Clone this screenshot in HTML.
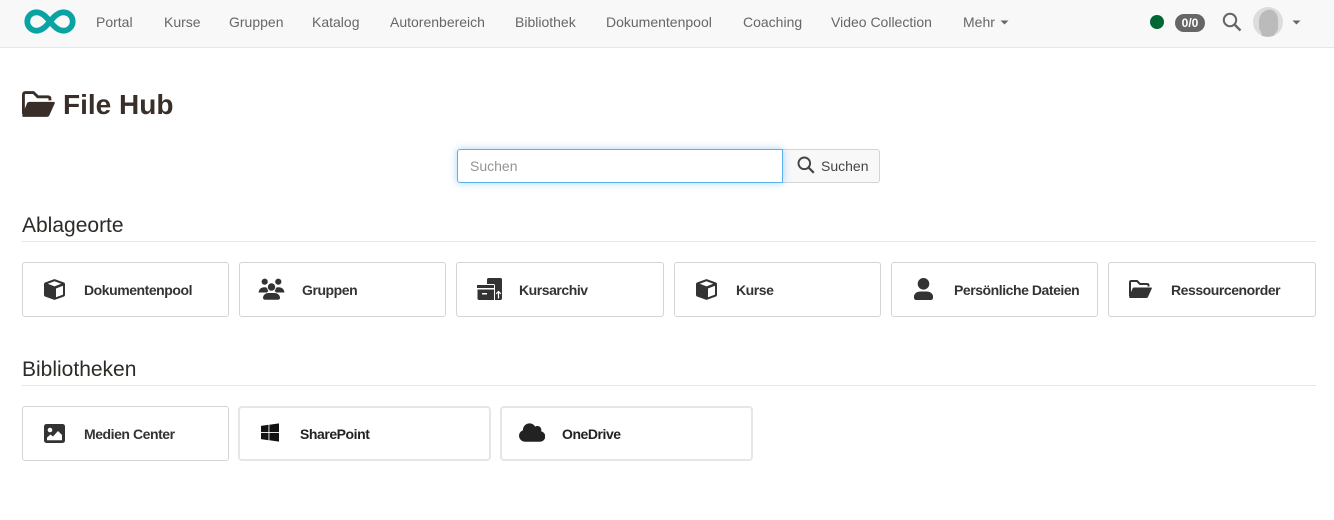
<!DOCTYPE html>
<html lang="de">
<head>
<meta charset="utf-8">
<title>File Hub</title>
<style>
html,body{margin:0;padding:0;background:#fff}
body{width:1334px;height:520px;position:relative;overflow:hidden;font-family:"Liberation Sans",sans-serif;color:#333}
.abs,.nav a,.card,svg{position:absolute}
#bar{position:absolute;left:0;top:0;width:1334px;height:47px;background:#f8f8f8;border-bottom:1px solid #e7e7e7}
.nav a{top:13px;font-size:14px;line-height:18px;color:#666;white-space:nowrap;text-decoration:none}
.card{box-sizing:border-box;height:55px;background:#fff;border:1px solid #d4d4d4;border-radius:3px}
.card.blur{border:2px solid #e6e6e6;border-radius:4px;height:55px;filter:blur(.3px)}
.txt{position:absolute;font-size:14px;font-weight:bold;line-height:18px;color:#333;white-space:nowrap;letter-spacing:-.45px}
.soft{filter:blur(.3px)}
h1,h3{margin:0;font-weight:normal;position:absolute;white-space:nowrap}
h1{left:63px;top:87px;font-size:28px;line-height:36px;font-weight:bold;color:#3a2f28}
h3{left:22px;font-size:21px;line-height:26px;color:#2e2a26}
.rule{position:absolute;left:22px;width:1294px;height:1px;background:#e6e6e6}
svg{fill:#333}
</style>
</head>
<body>
<div id="bar"></div>
<svg style="left:0;top:0;fill:none" width="100" height="47" viewBox="0 0 100 47"><path d="M50 21.500C46 16.500 42 12.300 36.500 12.300A9.200 9.200 0 0 0 36.500 30.700C42 30.700 46 26.500 50 21.500C54 16.500 58 12.300 63.500 12.300A9.200 9.200 0 0 1 63.500 30.700C58 30.700 54 26.500 50 21.500Z" stroke="#0aa3a3" stroke-width="5.800"/></svg>
<div class="nav">
<a style="left:96px">Portal</a>
<a style="left:164px">Kurse</a>
<a style="left:229px">Gruppen</a>
<a style="left:312px">Katalog</a>
<a style="left:390px">Autorenbereich</a>
<a style="left:515px">Bibliothek</a>
<a style="left:606px">Dokumentenpool</a>
<a style="left:743px">Coaching</a>
<a style="left:831px">Video Collection</a>
<a style="left:963px">Mehr</a>
</div>
<svg style="left:1000px;top:20px;fill:#666" width="9" height="5" viewBox="0 0 9 5"><path d="M0.500 0.500H8.500L4.500 4.500Z"/></svg>
<div class="abs" style="left:1150px;top:15px;width:14px;height:14px;border-radius:50%;background:#006633"></div>
<div class="abs" style="left:1175px;top:14px;width:30px;height:18px;border-radius:9px;background:#666;color:#fff;font-size:12px;font-weight:bold;line-height:18px;text-align:center">0/0</div>
<svg style="left:1222px;top:12px;fill:none" width="20" height="20" viewBox="0 0 20 20"><circle cx="8" cy="8" r="6.200" stroke="#666" stroke-width="2"/><path d="M12.600 12.600L18.500 18.500" stroke="#666" stroke-width="2.400"/></svg>
<svg style="left:1253px;top:7px" width="30" height="30" viewBox="0 0 30 30"><circle cx="15" cy="15" r="15" fill="#dcdcdc"/><path d="M6 15C6 8 10 3 17 2.500C22 3 25 8 25 13L25 22C24 25 22 26 21 28.500C17 30 13 30 9 29C9 26 7 24 6 21Z" fill="#bbb"/></svg>
<svg style="left:1292px;top:20px;fill:#666" width="9" height="5" viewBox="0 0 9 5"><path d="M0.500 0.500H8.500L4.500 4.500Z"/></svg>

<svg style="left:22px;top:91px;fill:#3a2f28" width="33" height="26" viewBox="0 0 23 18"><path d="M1 16V2.500Q1 1 2.500 1H8L11 4H18Q19.500 4 19.500 5.500V6.500" fill="none" stroke="#3a2f28" stroke-width="2"/><path d="M5 7.500H22Q23.300 7.500 22.700 8.800L19 17Q18.500 18 17.500 18H1Q-.2 18 .3 16.500L3.500 8.500Q4 7.500 5 7.500Z"/></svg>
<h1>File Hub</h1>

<div class="abs" style="left:457px;top:149px;width:326px;height:34px;box-sizing:border-box;background:#fff;border:1px solid #5cb0ec;border-radius:3px 0 0 3px;box-shadow:0 0 8px rgba(102,175,233,.55);font-size:14px;line-height:32px;padding-left:12px;color:#949494;z-index:2">Suchen</div>
<div class="abs" style="left:782px;top:149px;width:98px;height:34px;box-sizing:border-box;background:#f8f8f8;border:1px solid #d4d4d4;border-radius:0 3px 3px 0;font-size:14px;line-height:32px;padding-left:38px;color:#444">Suchen</div>
<svg style="left:797px;top:156px;fill:none;z-index:3" width="18" height="18" viewBox="0 0 18 18"><circle cx="7.300" cy="7.300" r="5.800" stroke="#444" stroke-width="1.900"/><path d="M11.500 11.500L16.800 16.800" stroke="#444" stroke-width="2.200"/></svg>

<h3 style="top:213px">Ablageorte</h3>
<div class="rule" style="top:241px"></div>

<div class="card" style="left:22px;top:262px;width:207px"></div>
<div class="card" style="left:239px;top:262px;width:207px"></div>
<div class="card" style="left:456px;top:262px;width:208px"></div>
<div class="card" style="left:674px;top:262px;width:207px"></div>
<div class="card" style="left:891px;top:262px;width:207px"></div>
<div class="card" style="left:1108px;top:262px;width:208px"></div>

<svg style="left:44px;top:279px" width="21" height="21" viewBox="0 0 21 21"><path fill-rule="evenodd" d="M10 .2Q10.500 0 11 .2L20 3.500Q21 4 21 5V16Q21 17 20 17.500L11 20.800Q10.500 21 10 20.800L1 17.500Q0 17 0 16V5Q0 4 1 3.500ZM10.500 2.200L3.800 4.800L10.500 7.400L17.200 4.800ZM12 9.500V18.300L19 15.600V6.800Z"/></svg>
<div class="txt" style="left:84px;top:281px">Dokumentenpool</div>

<svg style="left:258px;top:278px" width="27" height="22" viewBox="0 0 27 22"><circle cx="6.700" cy="3.700" r="3.100"/><circle cx="20.300" cy="3.700" r="3.100"/><circle cx="13.500" cy="9" r="3.700"/><path d="M.5 14.500C1 11 3 9.200 6.500 9.200C8 9.200 8.700 9.500 9.200 10.200C9.400 11.500 9.800 12.200 10.500 13C9.800 13.500 9.300 14 8.900 14.500Z"/><path d="M26.500 14.500C26 11 24 9.200 20.500 9.200C19 9.200 18.300 9.500 17.800 10.200C17.600 11.500 17.200 12.200 16.500 13C17.200 13.500 17.700 14 18.100 14.500Z"/><path d="M5 20C5 17 7.500 15 10.500 15H16.500C19.500 15 22 17 22 20C22 21 21 21.700 20 21.700H7C6 21.700 5 21 5 20Z"/></svg>
<div class="txt" style="left:302px;top:281px">Gruppen</div>

<svg style="left:476px;top:278px" width="26" height="22" viewBox="0 0 26 22"><path d="M11 1.500C11 .7 11.700 0 12.500 0H24.500C25.300 0 26 .7 26 1.500V20.500C26 21.300 25.300 22 24.500 22H19V7.500C19 6.700 18.300 6 17.500 6H11Z"/><path d="M1 7H18V10H1ZM1.500 11.500H18V22H3C2.200 22 1.500 21.300 1.500 20.500Z"/><path d="M6 15H11V16.500H6Z" fill="#fff"/><path d="M22.500 20.500V13.500M20.200 15.800L22.500 13.500L24.800 15.800" fill="none" stroke="#fff" stroke-width="1.200"/></svg>
<div class="txt" style="left:519px;top:281px">Kursarchiv</div>

<svg style="left:696px;top:279px" width="21" height="21" viewBox="0 0 21 21"><path fill-rule="evenodd" d="M10 .2Q10.500 0 11 .2L20 3.500Q21 4 21 5V16Q21 17 20 17.500L11 20.800Q10.500 21 10 20.800L1 17.500Q0 17 0 16V5Q0 4 1 3.500ZM10.500 2.200L3.800 4.800L10.500 7.400L17.200 4.800ZM12 9.500V18.300L19 15.600V6.800Z"/></svg>
<div class="txt" style="left:736px;top:281px">Kurse</div>

<svg style="left:914px;top:278px" width="19" height="22" viewBox="0 0 19 22"><circle cx="9.500" cy="5.800" r="5.800"/><path d="M0 20V18.500C0 15.500 3 13.500 6.500 13.500H12.500C16 13.500 19 15.500 19 18.500V20C19 21 18 22 17 22H2C1 22 0 21 0 20Z"/></svg>
<div class="txt" style="left:954px;top:281px">Persönliche Dateien</div>

<svg style="left:1129px;top:280px" width="23" height="18" viewBox="0 0 23 18"><path d="M1 16V2.500Q1 1 2.500 1H8L11 4H18Q19.500 4 19.500 5.500V6.500" fill="none" stroke="#333" stroke-width="2"/><path d="M5 7.500H22Q23.300 7.500 22.700 8.800L19 17Q18.500 18 17.500 18H1Q-.2 18 .3 16.500L3.500 8.500Q4 7.500 5 7.500Z"/></svg>
<div class="txt" style="left:1171px;top:281px">Ressourcenorder</div>

<h3 style="top:357px">Bibliotheken</h3>
<div class="rule" style="top:385px"></div>

<div class="card" style="left:22px;top:406px;width:207px"></div>
<div class="card blur" style="left:238px;top:406px;width:253px"></div>
<div class="card blur" style="left:500px;top:406px;width:253px"></div>

<svg style="left:44px;top:423.500px" width="21" height="19" viewBox="0 0 21 19"><rect width="21" height="19" rx="2.500"/><circle cx="6" cy="6" r="2.300" fill="#fff"/><path d="M3 16.300V13.500L6.500 10.500L9 12.500L14 7L18 11V16.300Z" fill="#fff"/></svg>
<div class="txt" style="left:84px;top:425px">Medien Center</div>

<svg class="soft" style="left:261px;top:422px;fill:#111" width="18.400" height="21" viewBox="0 0 448 512"><path d="M0 93.700l183.600-25.300v177.400H0V93.700zm0 324.600l183.600 25.300V268.400H0v149.900zm203.800 28L448 480V268.400H203.800v177.900zm0-380.600v180.100H448V32L203.800 65.700z"/></svg>
<div class="txt soft" style="left:300px;top:425px;color:#222">SharePoint</div>

<svg class="soft" style="left:519px;top:422px;fill:#222" width="26.300" height="21" viewBox="0 0 640 512"><path d="M537.600 226.600c4.100-10.700 6.400-22.400 6.400-34.600 0-53-43-96-96-96-19.700 0-38.100 6-53.300 16.200C367 64.200 315.300 32 256 32c-88.400 0-160 71.600-160 160 0 2.700.1 5.400.2 8.100C40.200 219.800 0 273.200 0 336c0 79.500 64.500 144 144 144h368c70.700 0 128-57.300 128-128 0-61.900-44-113.600-102.400-125.400z"/></svg>
<div class="txt soft" style="left:562px;top:425px;color:#222">OneDrive</div>
</body>
</html>
